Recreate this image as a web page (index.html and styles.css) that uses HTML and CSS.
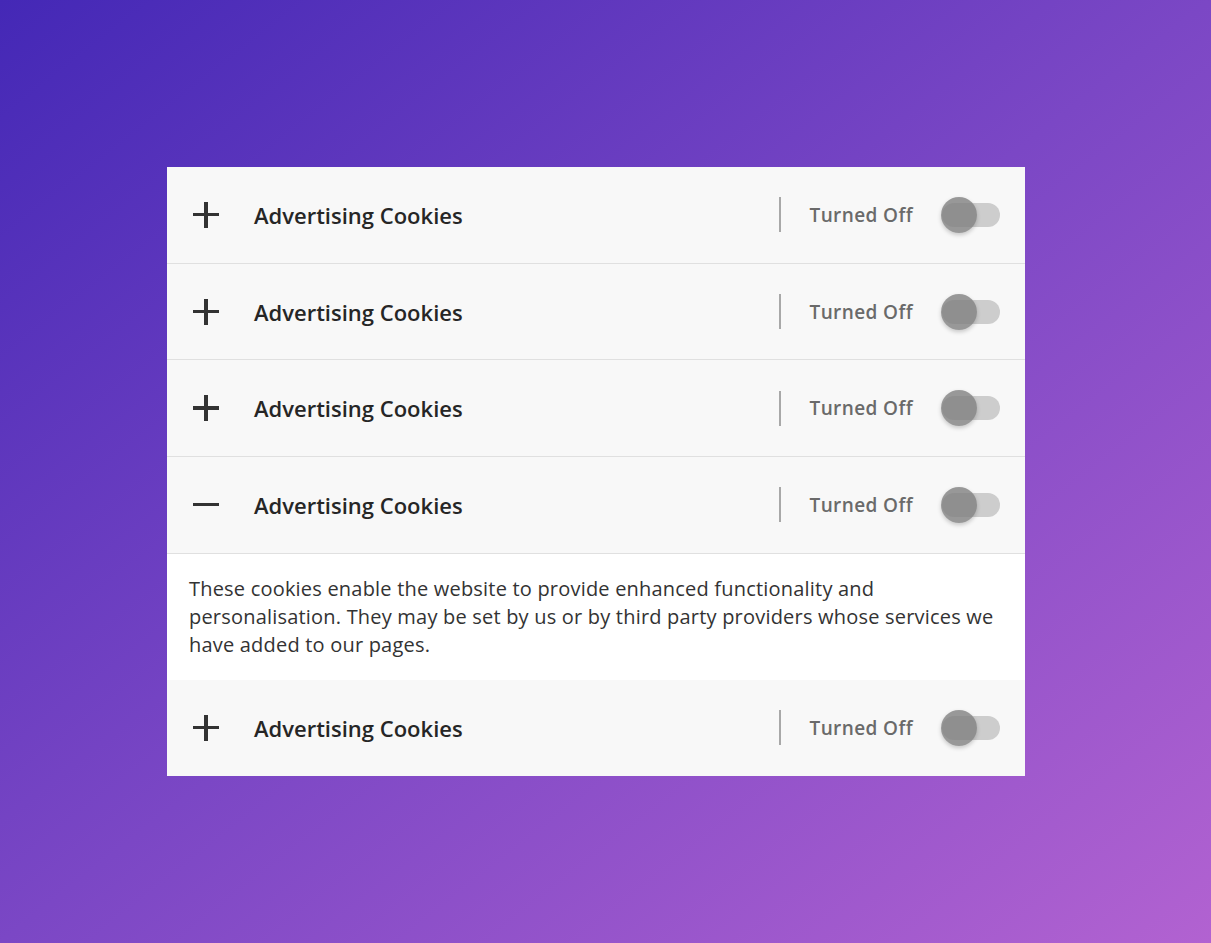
FILE: index.html
```html
<!DOCTYPE html>
<html lang="en">

<head>
    <meta charset="UTF-8">
    <meta name="viewport" content="width=device-width, initial-scale=1.0">
    <title>Cookie Settings</title>
    <link rel="stylesheet" href="styles.css">
</head>

<body>
    <div class="cookies">
        <div class="cookie-row">
            <span class="toggle-icon plus"></span>
            <span class="cookie-title">Advertising Cookies</span>
            <span class="divider"></span>
            <span class="status">Turned Off</span>
            <span class="switch"><span class="knob"></span></span>
        </div>
        <div class="cookie-row">
            <span class="toggle-icon plus"></span>
            <span class="cookie-title">Advertising Cookies</span>
            <span class="divider"></span>
            <span class="status">Turned Off</span>
            <span class="switch"><span class="knob"></span></span>
        </div>
        <div class="cookie-row">
            <span class="toggle-icon plus"></span>
            <span class="cookie-title">Advertising Cookies</span>
            <span class="divider"></span>
            <span class="status">Turned Off</span>
            <span class="switch"><span class="knob"></span></span>
        </div>
        <div class="cookie-row open">
            <span class="toggle-icon minus"></span>
            <span class="cookie-title">Advertising Cookies</span>
            <span class="divider"></span>
            <span class="status">Turned Off</span>
            <span class="switch"><span class="knob"></span></span>
        </div>
        <div class="cookie-body">
            These cookies enable the website to provide enhanced functionality and
            personalisation. They may be set by us or by third party providers whose services we
            have added to our pages.
        </div>
        <div class="cookie-row last">
            <span class="toggle-icon plus"></span>
            <span class="cookie-title">Advertising Cookies</span>
            <span class="divider"></span>
            <span class="status">Turned Off</span>
            <span class="switch"><span class="knob"></span></span>
        </div>
    </div>
</body>

</html>
```

FILE: styles.css
```css
body {
    margin: 0;
    height: 943px;
    overflow: hidden;
    background: linear-gradient(to bottom right, #4428b6, #7b47c5 50%, #b262d1);
    font-family: "Open Sans", "Liberation Sans", sans-serif;
    padding-top: 167px;
    box-sizing: border-box;
}

.cookies {
    width: 858px;
    margin-left: 167px;
    background-color: #f8f8f8;
}

.cookie-row {
    display: flex;
    align-items: center;
    height: 95.7px;
    border-bottom: 1px solid #e0e0e0;
    padding: 0 25px 0 26px;
}

.cookie-row.last {
    height: 96px;
    border-bottom: none;
}

.toggle-icon {
    position: relative;
    width: 26px;
    height: 26px;
    flex-shrink: 0;
}

.toggle-icon::before,
.toggle-icon::after {
    content: "";
    position: absolute;
    background-color: #333;
}

.toggle-icon::before {
    left: 0;
    right: 0;
    top: 11px;
    height: 3.5px;
}

.toggle-icon.plus::after {
    top: 0;
    bottom: 0;
    left: 11px;
    width: 3.5px;
}

.cookie-title {
    margin-left: 35px;
    font-size: 22px;
    font-weight: 600;
    color: #262626;
    flex: 1;
}

.divider {
    width: 2px;
    height: 35px;
    background-color: #a8a8a8;
}

.status {
    margin-left: 29px;
    font-size: 19px;
    font-weight: 600;
    color: #6a6a6a;
    letter-spacing: 0.4px;
}

.switch {
    position: relative;
    margin-left: 29px;
    width: 58px;
    height: 24px;
    border-radius: 12px;
    background-color: #cdcdcd;
}

.knob {
    position: absolute;
    left: -1px;
    top: -6px;
    width: 36px;
    height: 36px;
    border-radius: 50%;
    background-color: rgba(128, 128, 128, 0.8);
    box-shadow: 0 2px 4px rgba(0, 0, 0, 0.2);
}

.cookie-body {
    background-color: #fff;
    padding: 21px 30px 21px 22px;
    font-size: 20px;
    line-height: 28px;
    letter-spacing: 0.2px;
    color: #333;
}
```
